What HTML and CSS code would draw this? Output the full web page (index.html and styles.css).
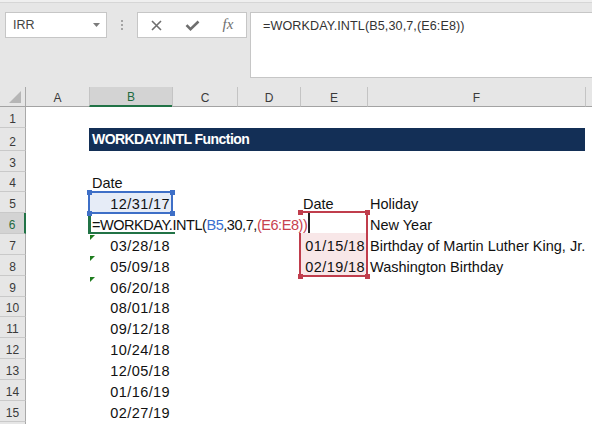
FILE: index.html
```html
<!DOCTYPE html>
<html>
<head>
<meta charset="utf-8">
<link rel="stylesheet" href="styles.css">
</head>
<body>
<div class="toolbar">
  <div class="namebox"><span>IRR</span><svg class="dd" width="7" height="4" viewBox="0 0 7 4"><path d="M0 0H7L3.5 4Z" fill="#7b7b7b"/></svg></div>
  <div class="grip"><i></i><i></i><i></i></div>
  <div class="fbtns">
    <span class="btn"><svg width="11" height="11" viewBox="0 0 11 11"><path d="M1 1L10 10M10 1L1 10" stroke="#6e6e6e" stroke-width="1.6" fill="none"/></svg></span>
    <span class="btn"><svg width="15" height="11" viewBox="0 0 15 11"><path d="M1.5 5.2L5.5 9.2L13.5 1.5" stroke="#6e6e6e" stroke-width="2.6" fill="none"/></svg></span>
    <span class="btn fx">fx</span>
  </div>
  <div class="fbar">=WORKDAY.INTL(B5,30,7,(E6:E8))</div>
</div>

<div class="sheet">
  <div class="hrow">
    <div class="corner"><svg width="12" height="12" viewBox="0 0 12 12"><path d="M12 0V12H0Z" fill="#b6b6b6"/></svg></div>
    <div class="ch first">A</div><div class="ch sel">B</div><div class="ch">C</div><div class="ch">D</div><div class="ch">E</div><div class="ch">F</div><div class="ch"></div>
  </div>
  <div class="row h21"><div class="rh">1</div><div class="c"></div><div class="c"></div><div class="c"></div><div class="c"></div><div class="c"></div><div class="c"></div><div class="c"></div></div>
  <div class="row h23"><div class="rh">2</div><div class="c"></div><div class="c title">WORKDAY.INTL Function</div><div class="c"></div></div>
  <div class="row h21"><div class="rh">3</div><div class="c"></div><div class="c"></div><div class="c"></div><div class="c"></div><div class="c"></div><div class="c"></div><div class="c"></div></div>
  <div class="row h20"><div class="rh">4</div><div class="c"></div><div class="c">Date</div><div class="c"></div><div class="c"></div><div class="c"></div><div class="c"></div><div class="c"></div></div>
  <div class="row h21"><div class="rh">5</div><div class="c"></div><div class="c r refb">12/31/17</div><div class="c"></div><div class="c"></div><div class="c">Date</div><div class="c">Holiday</div><div class="c"></div></div>
  <div class="row h21"><div class="rh sel">6</div><div class="c"></div><div class="c"></div><div class="c"></div><div class="c"></div><div class="c refr"></div><div class="c">New Year</div><div class="c"></div></div>
  <div class="row h21"><div class="rh">7</div><div class="c"></div><div class="c r err">03/28/18</div><div class="c"></div><div class="c"></div><div class="c r refr">01/15/18</div><div class="c">Birthday of Martin Luther King, Jr.</div><div class="c"></div></div>
  <div class="row h21"><div class="rh">8</div><div class="c"></div><div class="c r err">05/09/18</div><div class="c"></div><div class="c"></div><div class="c r refr">02/19/18</div><div class="c">Washington Birthday</div><div class="c"></div></div>
  <div class="row h21"><div class="rh">9</div><div class="c"></div><div class="c r err">06/20/18</div><div class="c"></div><div class="c"></div><div class="c"></div><div class="c"></div><div class="c"></div></div>
  <div class="row h20"><div class="rh">10</div><div class="c"></div><div class="c r">08/01/18</div><div class="c"></div><div class="c"></div><div class="c"></div><div class="c"></div><div class="c"></div></div>
  <div class="row h21"><div class="rh">11</div><div class="c"></div><div class="c r">09/12/18</div><div class="c"></div><div class="c"></div><div class="c"></div><div class="c"></div><div class="c"></div></div>
  <div class="row h21"><div class="rh">12</div><div class="c"></div><div class="c r">10/24/18</div><div class="c"></div><div class="c"></div><div class="c"></div><div class="c"></div><div class="c"></div></div>
  <div class="row h21"><div class="rh">13</div><div class="c"></div><div class="c r">12/05/18</div><div class="c"></div><div class="c"></div><div class="c"></div><div class="c"></div><div class="c"></div></div>
  <div class="row h21"><div class="rh">14</div><div class="c"></div><div class="c r">01/16/19</div><div class="c"></div><div class="c"></div><div class="c"></div><div class="c"></div><div class="c"></div></div>
  <div class="row h21"><div class="rh">15</div><div class="c"></div><div class="c r">02/27/19</div><div class="c"></div><div class="c"></div><div class="c"></div><div class="c"></div><div class="c"></div></div>
  <div class="row h21"><div class="rh"></div><div class="c"></div><div class="c"></div><div class="c"></div><div class="c"></div><div class="c"></div><div class="c"></div><div class="c"></div></div>

  <div class="refbox red"></div>
  <div class="editor"><span class="ftxt">=WORKDAY.INTL(<span class="fb">B5</span>,30,7,<span class="fr">(E6:E8))</span></span><span class="caret"></span></div>
  <div class="active"></div>
  <div class="refbox blue"><i class="hd tl"></i><i class="hd tr"></i><i class="hd bl"></i><i class="hd br"></i></div>
  <div class="redhandles"><i class="hd tl"></i><i class="hd tr"></i><i class="hd bl"></i><i class="hd br"></i></div>
</div>
</body>
</html>
```

FILE: styles.css
```css
html, body {
  margin: 0;
  padding: 0;
}
body {
  width: 592px;
  height: 424px;
  overflow: hidden;
  background: #ffffff;
  font-family: "Liberation Sans", Arial, sans-serif;
}

/* ---------- toolbar / formula bar ---------- */
.toolbar {
  height: 87px;
  box-sizing: border-box;
  padding-top: 12px;
  display: flex;
  align-items: flex-start;
  background: linear-gradient(#efefef 0 2px, #d6d6d6 2px 3px, #e6e6e6 3px);
}
.namebox {
  margin-left: 5px;
  width: 102px;
  height: 26px;
  box-sizing: border-box;
  border: 1px solid #c6c6c6;
  background: #fff;
  display: flex;
  align-items: center;
  justify-content: space-between;
  padding: 0 6px 0 7px;
  font-size: 12.5px;
  color: #444;
}
.grip {
  margin-left: 14px;
  margin-top: 8px;
  display: flex;
  flex-direction: column;
  gap: 2px;
}
.grip i {
  display: block;
  width: 2px;
  height: 2px;
  background: #a4a4a4;
}
.fbtns {
  margin-left: 14px;
  width: 110px;
  height: 26px;
  box-sizing: border-box;
  border: 1px solid #c6c6c6;
  background: #fff;
  display: flex;
  align-items: center;
}
.btn {
  width: 36px;
  height: 24px;
  display: flex;
  align-items: center;
  justify-content: center;
}
.btn.fx {
  font-family: "Liberation Serif", "Times New Roman", serif;
  font-style: italic;
  font-size: 15px;
  color: #6e6e6e;
  padding-bottom: 2px;
  box-sizing: border-box;
}
.fbar {
  margin-left: 3px;
  flex: 1;
  height: 66px;
  box-sizing: border-box;
  border: 1px solid #c6c6c6;
  border-right: none;
  background: #fff;
  padding: 6px 12px;
  font-size: 12.6px;
  letter-spacing: 0.1px;
  color: #333;
  white-space: nowrap;
}

/* ---------- sheet grid ---------- */
.sheet {
  position: relative;
}
.hrow, .row {
  display: grid;
  grid-template-columns: 26px 63px 83px 65px 63px 67px 218px 1fr;
}
.hrow {
  height: 20px;
  background: #e6e6e6;
}
.h20 { height: 20px; }
.h21 { height: 21px; }
.h23 { height: 23px; }

.corner {
  box-sizing: border-box;
  border-right: 1px solid #a9a9a9;
  border-bottom: 1px solid #a3a3a3;
  display: flex;
  align-items: flex-end;
  justify-content: flex-end;
  padding: 0 4px 3px 0;
}
.ch {
  box-sizing: border-box;
  border-left: 1px solid #c4c4c4;
  border-bottom: 1px solid #a3a3a3;
  display: flex;
  align-items: center;
  justify-content: center;
  padding-top: 2px;
  font-size: 12px;
  color: #3a3a3a;
}
.ch.first {
  border-left: none;
}
.ch.sel {
  background: #d3d3d3;
  color: #1e6b40;
  border-bottom: 2px solid #217346;
}

.rh {
  box-sizing: border-box;
  background: #e6e6e6;
  border-right: 1px solid #a9a9a9;
  border-bottom: 1px solid #c9c9c9;
  display: flex;
  align-items: flex-end;
  justify-content: center;
  padding-bottom: 1px;
  font-size: 12px;
  color: #3a3a3a;
}
.rh.sel {
  background: #d3d3d3;
  color: #1e6b40;
  border-right: 2px solid #217346;
}

.c {
  position: relative;
  min-width: 0;
  box-sizing: border-box;
  display: flex;
  align-items: flex-end;
  padding: 0 3px 1px 3px;
  font-size: 14.5px;
  color: #111;
  white-space: nowrap;
}
.c.r {
  justify-content: flex-end;
  padding-right: 2px;
  letter-spacing: 0.4px;
}
.c.title {
  grid-column: 3 / span 5;
  background: #132f56;
  color: #fff;
  font-weight: bold;
  font-size: 14px;
  letter-spacing: -0.55px;
  padding-bottom: 4px;
}
.refb { background: #e6ecf7; }
.refr { background: #f8e7e8; }
.err::before {
  content: "";
  position: absolute;
  left: 1px;
  top: 1px;
  border-style: solid;
  border-width: 5px 5px 0 0;
  border-color: #1f7d1f transparent transparent transparent;
}

/* ---------- overlays (selection / editing) ---------- */
.refbox {
  position: absolute;
  box-sizing: border-box;
  border: 2px solid;
}
.refbox.red {
  left: 299px;
  top: 124px;
  width: 69px;
  height: 66px;
  border-color: #c03d4c;
  z-index: 1;
}
.refbox.blue {
  left: 88px;
  top: 104px;
  width: 85px;
  height: 23px;
  border-color: #3e6fc7;
  z-index: 3;
}
.hd {
  position: absolute;
  width: 5px;
  height: 5px;
}
.refbox.blue .hd { background: #3e6fc7; }
.hd.tl { left: -3.5px; top: -3.5px; }
.hd.tr { right: -3.5px; top: -3.5px; }
.hd.bl { left: -3.5px; bottom: -3.5px; }
.hd.br { right: -3.5px; bottom: -3.5px; }

.redhandles {
  position: absolute;
  left: 299px;
  top: 124px;
  width: 69px;
  height: 66px;
  z-index: 4;
  pointer-events: none;
}
.redhandles .hd { background: #c03d4c; }
.redhandles .hd.tl { left: -1.5px; top: -1.5px; }
.redhandles .hd.tr { right: -1.5px; top: -1.5px; }
.redhandles .hd.bl { left: -1.5px; bottom: -1.5px; }
.redhandles .hd.br { right: -1.5px; bottom: -1.5px; }

.editor {
  position: absolute;
  left: 88px;
  top: 126px;
  width: 278px;
  height: 20px;
  box-sizing: border-box;
  background: #fff;
  z-index: 2;
  display: flex;
  align-items: flex-end;
  padding-left: 4px;
  font-size: 14.5px;
  letter-spacing: -0.45px;
  color: #111;
  white-space: nowrap;
}
.ftxt { line-height: normal; }
.fb { color: #3a6fd0; }
.fr { color: #c8414e; }
.caret {
  display: block;
  align-self: stretch;
  width: 2px;
  margin-left: 1px;
  background: #222;
}
.active {
  position: absolute;
  left: 88px;
  top: 126px;
  width: 87px;
  height: 21px;
  box-sizing: border-box;
  border-left: 3px solid #217346;
  border-bottom: 2px solid #217346;
  z-index: 3;
}
```
